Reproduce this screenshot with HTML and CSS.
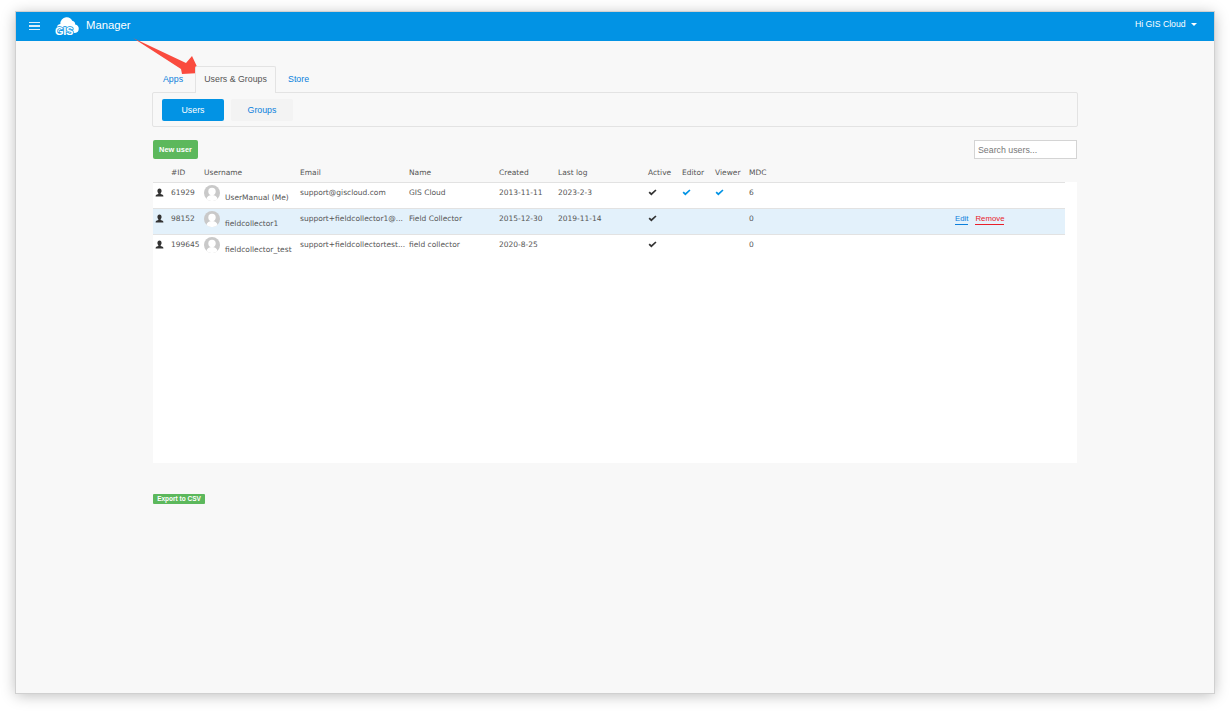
FILE: index.html
```html
<!DOCTYPE html>
<html lang="en">
<head>
  <meta charset="UTF-8">
  <title>GIS Cloud Manager</title>
  <link rel="stylesheet" href="styles.css">
</head>
<body>
  <div class="window">
    <header class="topbar">
      <div class="menu-icon"><span></span><span></span><span></span></div>
      <div class="logo">
        <svg width="25" height="21" viewBox="0 0 25 21"><path fill="#fff" d="M6 17a4.6 4.6 0 0 1-.6-9.1A6.2 6.2 0 0 1 11 1.2a6 6 0 0 1 6.200 3.600a3.800 3.800 0 0 1 3 3.700A4.300 4.300 0 0 1 20 17z"/></svg>
        <span class="logo-text">GIS</span>
      </div>
      <span class="app-name">Manager</span>
      <span class="user-menu">Hi GIS Cloud <i class="caret"></i></span>
    </header>

    <main class="content">
      <nav class="tabs">
        <a class="tab">Apps</a>
        <a class="tab tab-active">Users &amp; Groups</a>
        <a class="tab">Store</a>
      </nav>
      <div class="pill-panel">
        <a class="pill pill-active">Users</a>
        <a class="pill">Groups</a>
      </div>

      <div class="toolbar">
        <button class="btn-new">New user</button>
        <input class="search" type="text" placeholder="Search users...">
      </div>

      <div class="table-wrap">
        <table class="users">
          <colgroup>
            <col class="c-icon"><col class="c-id"><col class="c-user"><col class="c-email"><col class="c-name">
            <col class="c-created"><col class="c-log"><col class="c-active"><col class="c-editor"><col class="c-viewer">
            <col class="c-mdc"><col class="c-actions">
          </colgroup>
          <thead>
            <tr>
              <th></th><th>#ID</th><th>Username</th><th>Email</th><th>Name</th><th>Created</th><th>Last log</th>
              <th>Active</th><th>Editor</th><th>Viewer</th><th>MDC</th><th></th>
            </tr>
          </thead>
          <tbody>
            <tr>
              <td><svg class="person" viewBox="0 0 10 10"><use href="#i-person"/></svg></td>
              <td>61929</td>
              <td><div class="user-cell"><svg class="avatar" viewBox="0 0 16 16"><use href="#i-avatar"/></svg><span>UserManual (Me)</span></div></td>
              <td>support@giscloud.com</td>
              <td>GIS Cloud</td>
              <td>2013-11-11</td>
              <td>2023-2-3</td>
              <td><svg class="check" viewBox="0 0 10 8"><use href="#i-check"/></svg></td>
              <td><svg class="check check-blue" viewBox="0 0 10 8"><use href="#i-check"/></svg></td>
              <td><svg class="check check-blue" viewBox="0 0 10 8"><use href="#i-check"/></svg></td>
              <td>6</td>
              <td></td>
            </tr>
            <tr class="row-hover">
              <td><svg class="person" viewBox="0 0 10 10"><use href="#i-person"/></svg></td>
              <td>98152</td>
              <td><div class="user-cell"><svg class="avatar" viewBox="0 0 16 16"><use href="#i-avatar"/></svg><span>fieldcollector1</span></div></td>
              <td>support+fieldcollector1@...</td>
              <td>Field Collector</td>
              <td>2015-12-30</td>
              <td>2019-11-14</td>
              <td><svg class="check" viewBox="0 0 10 8"><use href="#i-check"/></svg></td>
              <td></td>
              <td></td>
              <td>0</td>
              <td class="actions"><a class="edit">Edit</a><a class="remove">Remove</a></td>
            </tr>
            <tr>
              <td><svg class="person" viewBox="0 0 10 10"><use href="#i-person"/></svg></td>
              <td>199645</td>
              <td><div class="user-cell"><svg class="avatar" viewBox="0 0 16 16"><use href="#i-avatar"/></svg><span>fieldcollector_test</span></div></td>
              <td>support+fieldcollectortest...</td>
              <td>field collector</td>
              <td>2020-8-25</td>
              <td></td>
              <td><svg class="check" viewBox="0 0 10 8"><use href="#i-check"/></svg></td>
              <td></td>
              <td></td>
              <td>0</td>
              <td></td>
            </tr>
          </tbody>
        </table>
      </div>

      <button class="btn-export">Export to CSV</button>
    </main>
  </div>

  <!-- red annotation arrow drawn over the screenshot -->
  <svg class="arrow" width="70" height="40" viewBox="0 0 70 40">
    <path fill="#fa4b3e" d="M0 0 L53 25 L59 18 L67 35 L49 36 L48 31 Z"/>
  </svg>

  <svg class="defs" width="0" height="0">
    <defs>
      <g id="i-person"><path d="M5 .5c1.500 0 2.300 1.100 2.300 2.700 0 1.100-.5 2-1 2.500v.9c.6.4 2.700.8 3 1.900V9.500H.700V8.500c.3-1.100 2.400-1.500 3-1.900v-.9c-.5-.5-1-1.400-1-2.500C2.700 1.600 3.500.5 5 .5z"/></g>
      <g id="i-check"><path d="M.5 4.200 1.900 2.900 3.700 4.700 8.300.6 9.600 1.800 3.700 7.500z"/></g>
      <g id="i-avatar">
        <circle cx="8" cy="8" r="8" fill="#c9c9c9"/>
        <circle cx="8" cy="6.500" r="3.700" fill="#fff"/>
        <path fill="#fff" d="M2.400 14c.6-2.800 2.800-4 5.600-4s5 1.200 5.600 4A8 8 0 0 1 8 16a8 8 0 0 1-5.600-2z"/>
      </g>
    </defs>
  </svg>
</body>
</html>
```

FILE: styles.css
```css
* {
  box-sizing: border-box;
}

body {
  margin: 0;
  padding: 12px 16px 21px;
  height: 714px;
  overflow: hidden;
  background: #fff;
  font-family: "Liberation Sans", Arial, sans-serif;
}

.window {
  height: 681px;
  background: #f8f8f8;
  box-shadow: 0 0 0 1px #d0d0d0, 0 2px 14px rgba(0, 0, 0, 0.28);
}

.topbar {
  display: flex;
  align-items: center;
  height: 29px;
  padding: 0 17px 0 13px;
  background: #0293e4;
  color: #fff;
}

.menu-icon {
  display: flex;
  flex-direction: column;
  gap: 2px;
  width: 11px;
  margin-top: -1px;
  margin-right: 15px;
}

.menu-icon span {
  display: block;
  height: 1.500px;
  background: rgba(255, 255, 255, 0.85);
}

.logo {
  position: relative;
  width: 25px;
  height: 21px;
  margin-top: -1px;
  margin-right: 6px;
}

.logo svg {
  display: block;
}

.logo-text {
  position: absolute;
  left: 0;
  top: 10px;
  color: #fff;
  font-size: 11px;
  font-weight: bold;
  line-height: 11px;
  letter-spacing: -0.3px;
  -webkit-text-stroke: 1.500px #0293e4;
  paint-order: stroke fill;
}

.app-name {
  font-size: 11.300px;
  margin-top: -3px;
}

.user-menu {
  margin-left: auto;
  margin-top: -6px;
  font-size: 8.700px;
}

.caret {
  display: inline-block;
  margin-left: 3px;
  vertical-align: middle;
  border-top: 3px solid #fff;
  border-left: 3px solid transparent;
  border-right: 3px solid transparent;
}

.content {
  padding: 25px 137px 0 137px;
}

.tabs {
  display: flex;
  height: 26px;
}

.tab {
  padding: 8px 10px 0;
  font-size: 8.800px;
  color: #0b80dc;
  line-height: 10px;
}

.tab-active {
  position: relative;
  z-index: 1;
  width: 81px;
  height: 27px;
  margin: 0 2px;
  padding: 7px 0 0;
  background: #f8f8f8;
  border: 1px solid #e3e3e3;
  border-bottom: none;
  border-radius: 2px 2px 0 0;
  color: #555;
  text-align: center;
}

.pill-panel {
  display: flex;
  gap: 7px;
  height: 35px;
  margin-left: -1px;
  margin-right: -1px;
  padding: 6px 9px;
  border: 1px solid #e3e3e3;
  border-radius: 2px;
}

.pill {
  width: 62px;
  height: 22px;
  border-radius: 2px;
  background: #f3f3f3;
  color: #0b80dc;
  font-size: 8.800px;
  line-height: 22px;
  text-align: center;
}

.pill-active {
  background: #0293e4;
  color: #fff;
}

.toolbar {
  display: flex;
  justify-content: space-between;
  margin-top: 13px;
}

.btn-new {
  width: 45px;
  height: 19px;
  padding: 0;
  border: none;
  border-radius: 2px;
  background: #5cb85c;
  color: #fff;
  font-family: "Liberation Sans", Arial, sans-serif;
  font-size: 7.400px;
  font-weight: bold;
}

.search {
  width: 103px;
  height: 19px;
  padding: 0 3px;
  border: 1px solid #d4d4d4;
  background: #fff;
  font-family: "Liberation Sans", Arial, sans-serif;
  font-size: 8.800px;
  outline: none;
}

.search::placeholder {
  color: #777;
}

.table-wrap {
  margin-top: 5px;
  height: 299px;
  background: linear-gradient(#f8f8f8 18px, #fff 18px);
}

.users {
  width: 912px;
  table-layout: fixed;
  border-collapse: collapse;
  font-family: "DejaVu Sans", Verdana, sans-serif;
  font-size: 7.500px;
  color: #555;
}

.c-icon { width: 18px; }
.c-id { width: 33px; }
.c-user { width: 96px; }
.c-email { width: 109px; }
.c-name { width: 90px; }
.c-created { width: 59px; }
.c-log { width: 90px; }
.c-active { width: 34px; }
.c-editor { width: 33px; }
.c-viewer { width: 34px; }
.c-mdc { width: 206px; }
.c-actions { width: 110px; }

.users th {
  height: 18px;
  padding: 0;
  border-bottom: 1px solid #e2e2e2;
  font-weight: normal;
  text-align: left;
  vertical-align: middle;
  white-space: nowrap;
}

.users td {
  height: 26px;
  padding: 0 0 5px;
  border-bottom: 1px solid #e2e2e2;
  white-space: nowrap;
  vertical-align: middle;
}

.users tbody tr:last-child td {
  border-bottom: none;
}

.users td:first-child {
  padding-left: 2px;
}

.row-hover td {
  background: #e3f1fb;
}

.person {
  display: block;
  width: 9px;
  height: 9px;
  fill: #333;
}

.check {
  display: block;
  width: 9px;
  height: 7px;
  fill: #333;
}

.check-blue {
  fill: #0293e4;
}

.user-cell {
  display: flex;
  align-items: flex-start;
  gap: 5px;
  margin-top: 2px;
}

.avatar {
  display: block;
  width: 16px;
  height: 16px;
  flex: none;
}

.user-cell span {
  margin-top: 8px;
  line-height: 9px;
}

.actions {
  font-family: "Liberation Sans", Arial, sans-serif;
}

.edit,
.remove {
  padding-bottom: 1px;
  font-size: 7.800px;
}

.edit {
  color: #0b80dc;
  border-bottom: 1px solid #0b80dc;
  margin-right: 7px;
}

.remove {
  color: #e8202a;
  border-bottom: 1px solid #e8202a;
}

.btn-export {
  display: block;
  width: 52px;
  height: 10px;
  margin-top: 31px;
  padding: 0;
  border: none;
  border-radius: 1px;
  background: #5cb85c;
  color: #fff;
  font-family: "Liberation Sans", Arial, sans-serif;
  font-size: 6.500px;
  font-weight: bold;
  line-height: 10px;
}

/* annotation over the tab, not part of the page flow */
.arrow {
  position: absolute;
  left: 133px;
  top: 38px;
}

.defs {
  position: absolute;
}
```
